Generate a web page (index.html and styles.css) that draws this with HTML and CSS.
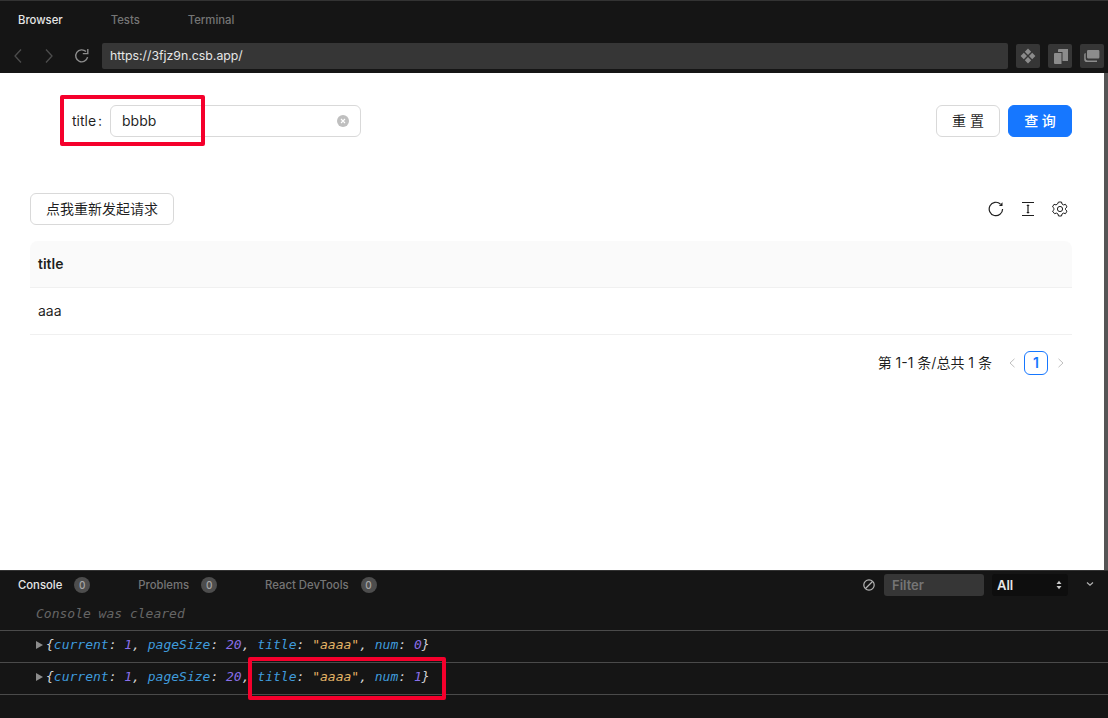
FILE: index.html
```html
<!DOCTYPE html>
<html lang="zh">
<head>
<meta charset="utf-8">
<title>Browser</title>
<link rel="stylesheet" href="styles.css">
</head>
<body>
<div class="app">
  <header class="chrome">
    <nav class="tabs">
      <span class="tab active">Browser</span>
      <span class="tab">Tests</span>
      <span class="tab">Terminal</span>
    </nav>
    <div class="addr-row">
      <svg class="nav-ico first" width="10" height="16" viewBox="0 0 10 16"><path d="M8 1.500 2 8l6 6.500" class="st-dim"/></svg>
      <svg class="nav-ico second" width="10" height="16" viewBox="0 0 10 16"><path d="M2 1.500 8 8l-6 6.500" class="st-dim"/></svg>
      <svg class="nav-ico third" width="16" height="16" viewBox="0 0 16 16"><path d="M13.600 9.200A6 6 0 1 1 12 3.600" class="st-mid"/><path d="M8.800 5.600h5V.9" class="st-mid"/></svg>
      <div class="url">https://3fjz9n.csb.app/</div>
      <div class="ico-btn"><svg width="16" height="16" viewBox="0 0 16 16" fill="#8c8c8c"><path d="M8 .6 11.200 3.800 8 7 4.800 3.800zM3.800 4.800 7 8 3.800 11.200 .6 8zM12.200 4.800 15.400 8 12.200 11.200 9 8zM8 9 11.200 12.200 8 15.400 4.800 12.200z"/></svg></div>
      <div class="ico-btn"><svg width="16" height="16" viewBox="0 0 16 16" fill="#8c8c8c"><path d="M2 6a1 1 0 0 1 1-1h6.500v11H3a1 1 0 0 1-1-1z"/><path d="M6 2a1 1 0 0 1 1-1h9.200v12H10.500V4H6z"/></svg></div>
      <div class="ico-btn"><svg width="16" height="16" viewBox="0 0 16 16" fill="#8c8c8c"><path d="M3 3.200A1.200 1.200 0 0 1 4.200 2h10A1.200 1.200 0 0 1 15.400 3.200v6a1.200 1.200 0 0 1-1.200 1.200h-10A1.200 1.200 0 0 1 3 9.200z"/><path d="M.2 6.500A1.500 1.500 0 0 1 1.700 5v5.500a2 2 0 0 0 2 2h9.300V14H3a2.800 2.800 0 0 1-2.800-2.800z"/></svg></div>
    </div>
  </header>

  <main class="page">
    <div class="content">
      <form class="search">
        <div class="field">
          <label class="field-label">title<span class="colon">:</span></label>
          <div class="input">
            <span class="input-value">bbbb</span>
            <svg class="clear" width="12" height="12" viewBox="0 0 12 12"><circle cx="6" cy="6" r="6" fill="#bfbfbf"/><path d="M4 4l4 4M8 4l-4 4" stroke="#fff" stroke-width="1.100"/></svg>
          </div>
        </div>
        <div class="actions">
          <button type="button" class="btn">重 置</button>
          <button type="button" class="btn primary">查 询</button>
        </div>
      </form>

      <div class="toolbar">
        <button type="button" class="btn">点我重新发起请求</button>
        <div class="tools">
          <svg width="16" height="16" viewBox="0 0 16 16" class="tool"><path d="M14.600 8A6.700 6.700 0 1 1 12.400 3" class="st-dark"/><path d="M14.500 1.300v3.600h-3.600z" fill="#1f1f1f"/></svg>
          <svg width="16" height="16" viewBox="0 0 16 16" class="tool"><path d="M2 1.500h12M2 14.500h12M8 4v8" class="st-dark"/><path d="M6.300 5 8 3.200 9.700 5zM6.300 11 8 12.800 9.700 11z" fill="#1f1f1f"/></svg>
          <svg width="16" height="16" viewBox="0 0 16 16" class="tool"><path d="M6.500 1h3l.5 2 1.500.9 2-.6 1.500 2.600-1.500 1.400v1.400l1.500 1.400-1.500 2.600-2-.6-1.500.9-.5 2h-3l-.5-2-1.500-.9-2 .6L.5 10.100 2 8.700V7.300L.5 5.900 2 3.300l2 .6 1.500-.9z" class="st-thin"/><circle cx="8" cy="8" r="2.600" class="st-thin"/></svg>
        </div>
      </div>

      <table class="table">
        <thead><tr><th>title</th></tr></thead>
        <tbody><tr><td>aaa</td></tr></tbody>
      </table>

      <div class="pager">
        <span class="total">第 1-1 条/总共 1 条</span>
        <svg class="arrow" width="8" height="10" viewBox="0 0 8 10"><path d="M6.500.8 2 5l4.500 4.200" class="st-light"/></svg>
        <span class="page-num">1</span>
        <svg class="arrow" width="8" height="10" viewBox="0 0 8 10"><path d="M1.500.8 6 5 1.500 9.200" class="st-light"/></svg>
      </div>
    </div>
    <div class="scrollbar"></div>
  </main>

  <section class="console">
    <div class="con-bar">
      <span class="con-tab active">Console</span><span class="count c1">0</span>
      <span class="con-tab t2">Problems</span><span class="count c2">0</span>
      <span class="con-tab t3">React DevTools</span><span class="count c3">0</span>
      <svg class="block-ico" width="12" height="12" viewBox="0 0 12 12"><circle cx="6" cy="6" r="5.200" class="st-block"/><path d="M2.500 9.500l7-7" class="st-block"/></svg>
      <span class="filter">Filter</span>
      <span class="select">All<svg width="6" height="10" viewBox="0 0 6 10" fill="#c8c8c8"><path d="M3 .8 5.500 4h-5zM3 9.200.5 6h5z"/></svg></span>
      <svg class="chev" width="8" height="6" viewBox="0 0 8 6"><path d="M1 1.500 4 4.300l3-2.800" class="st-chev"/></svg>
    </div>
    <div class="log cleared"><span class="log-text">Console was cleared</span></div>
    <div class="log"><span class="log-text"><span class="tri"></span><span class="p">{</span><span class="k">current</span><span class="p">: </span><span class="n">1</span><span class="p">, </span><span class="k">pageSize</span><span class="p">: </span><span class="n">20</span><span class="p">, </span><span class="k">title</span><span class="p">: </span><span class="s">"aaaa"</span><span class="p">, </span><span class="k">num</span><span class="p">: </span><span class="n">0</span><span class="p">}</span></span></div>
    <div class="log"><span class="log-text"><span class="tri"></span><span class="p">{</span><span class="k">current</span><span class="p">: </span><span class="n">1</span><span class="p">, </span><span class="k">pageSize</span><span class="p">: </span><span class="n">20</span><span class="p">, </span><span class="k">title</span><span class="p">: </span><span class="s">"aaaa"</span><span class="p">, </span><span class="k">num</span><span class="p">: </span><span class="n">1</span><span class="p">}</span></span></div>
  </section>

  <div class="mark mark-form"></div>
  <div class="mark mark-log"></div>
</div>
</body>
</html>
```
FILE: styles.css
```css
* { box-sizing: border-box; }
html, body { margin: 0; padding: 0; }
body {
  width: 1108px;
  height: 718px;
  overflow: hidden;
  font-family: Inter, "Noto Sans CJK SC", sans-serif;
  background: #151515;
}
.app { position: relative; display: flex; flex-direction: column; height: 718px; }

/* browser chrome */
.chrome { height: 73px; flex: none; background: #151515; border-top: 1px solid #333; }
.tabs { display: flex; height: 41px; align-items: center; padding: 0 0 4px 18px; gap: 48px; }
.tab { font-size: 11.300px; font-weight: 500; color: #757575; }
.tab.active { color: #e6e6e6; }
.addr-row { display: flex; align-items: flex-start; height: 31px; padding-top: 1px; }
.nav-ico { flex: none; margin-top: 5px; }
.nav-ico.first { margin-left: 13px; }
.nav-ico.second { margin-left: 21px; }
.nav-ico.third { margin-left: 20px; }
.url {
  margin-left: 12px;
  width: 906px;
  height: 26px;
  background: #363636;
  border-radius: 2px;
  color: #e6e6e6;
  font-size: 12.300px;
  line-height: 25px;
  padding-left: 8px;
}
.ico-btn {
  width: 24px;
  height: 24px;
  margin-left: 8px;
  margin-top: 1px;
  background: #363636;
  border-radius: 2px;
  display: flex;
  align-items: center;
  justify-content: center;
}
.st-dim { fill: none; stroke: #4d4d4d; stroke-width: 1.300; }
.st-mid { fill: none; stroke: #8c8c8c; stroke-width: 1.400; }
.st-dark { fill: none; stroke: #1f1f1f; stroke-width: 1.200; }
.st-thin { fill: none; stroke: #1f1f1f; stroke-width: 1; stroke-linejoin: round; }
.st-light { fill: none; stroke: #bfbfbf; stroke-width: 1; }
.st-block { fill: none; stroke: #b3b3b3; stroke-width: 1.200; }
.st-chev { fill: none; stroke: #b3b3b3; stroke-width: 1.200; }

/* page */
.page { flex: none; height: 497px; background: #fff; display: flex; }
.content { flex: 1; padding: 32px 32px 0 30px; color: rgba(0,0,0,.88); font-size: 14px; }
.scrollbar { width: 4px; background: #555; flex: none; }
.search { display: flex; justify-content: space-between; height: 32px; }
.field { display: flex; align-items: center; margin-left: 42px; }
.field-label { width: 38px; font-size: 14px; padding-bottom: 2px; }
.colon { margin-left: 2px; }
.input {
  width: 251px;
  height: 32px;
  border: 1px solid #d9d9d9;
  border-radius: 6px;
  display: flex;
  align-items: center;
  justify-content: space-between;
  padding: 0 11px;
  font-size: 14px;
}
.input-value { font-size: 14px; padding-bottom: 2px; }
.actions { display: flex; gap: 8px; }
.btn {
  height: 32px;
  padding: 0 15px;
  border: 1px solid #d9d9d9;
  border-radius: 6px;
  background: #fff;
  color: rgba(0,0,0,.88);
  font-family: inherit;
  font-size: 14px;
  line-height: 22px;
  white-space: nowrap;
}
.actions .btn { width: 64px; padding: 0; }
.btn.primary { background: #1677ff; border-color: #1677ff; color: #fff; font-weight: 500; }
.toolbar { display: flex; justify-content: space-between; align-items: center; margin-top: 56px; height: 32px; }
.tools { display: flex; gap: 16px; padding-right: 4px; }
.tool { display: block; }
.table { width: 100%; border-collapse: separate; border-spacing: 0; margin-top: 16px; }
.table th, .table td { height: 47px; padding: 0 8px 2px; text-align: left; font-size: 14px; border-bottom: 1px solid #f0f0f0; }
.table th { background: #fafafa; font-weight: 600; border-radius: 8px 8px 0 0; }
.pager { display: flex; justify-content: flex-end; align-items: center; margin-top: 16px; height: 24px; }
.total { margin-right: 16px; font-size: 14px; padding-bottom: 2px; }
.arrow { margin: 0 8px 0 0; }
.page-num {
  width: 24px;
  height: 24px;
  line-height: 22px;
  border: 1px solid #1677ff;
  border-radius: 6px;
  text-align: center;
  color: #1677ff;
  font-weight: 600;
  font-size: 14px;
  margin-right: 9px;
}
.pager .arrow:last-child { margin-right: 7px; }

/* console */
.console { flex: 1; background: #151515; border-top: 1px solid #333; position: relative; }
.con-bar { display: flex; align-items: center; height: 28px; padding-left: 18px; font-size: 11.300px; font-weight: 500; }
.con-tab { color: #757575; }
.con-tab.active { color: #e6e6e6; }
.con-tab.t2 { margin-left: 48px; }
.con-tab.t3 { margin-left: 48px; }
.count {
  width: 16px;
  height: 16px;
  border-radius: 50%;
  background: #4d4d4d;
  color: #a6a6a6;
  font-size: 10px;
  line-height: 16px;
  text-align: center;
  margin-left: 12px;
}
.block-ico { margin-left: auto; }
.filter {
  margin-left: 9px;
  width: 100px;
  height: 22px;
  background: #363636;
  border-radius: 3px;
  color: #757575;
  font-size: 13px;
  font-weight: 600;
  line-height: 22px;
  padding-left: 8px;
}
.select {
  margin-left: 8px;
  width: 76px;
  height: 22px;
  background: #0e0e0e;
  border-radius: 3px;
  color: #e6e6e6;
  font-size: 13px;
  font-weight: 600;
  display: flex;
  align-items: center;
  justify-content: space-between;
  padding: 0 6px 0 5px;
}
.chev { margin: -2px 14px 0 18px; }
.log {
  height: 32px;
  border-bottom: 1px solid #4a4a4a;
  font-family: "DejaVu Sans Mono", monospace;
  font-size: 13px;
  font-style: italic;
  padding: 0 0 4px 36px;
  display: flex;
  align-items: center;
  white-space: pre;
}
.log-text { display: flex; align-items: center; }
.log.cleared { height: 32px; color: #666; padding-bottom: 3px; }
.tri {
  width: 0;
  height: 0;
  margin-right: 3px;
  border-left: 7px solid #8c8c8c;
  border-top: 4px solid transparent;
  border-bottom: 4px solid transparent;
}
.p { color: #d4d4d4; }
.k { color: #3f9bdc; }
.n { color: #8a6fe8; }
.s { color: #e5b567; }

/* annotation frames */
.mark { position: absolute; border: 4px solid #f5002c; border-radius: 2px; pointer-events: none; }
.mark-form { left: 60px; top: 95px; width: 145px; height: 51px; }
.mark-log { left: 248px; top: 657px; width: 198px; height: 43px; }
```
